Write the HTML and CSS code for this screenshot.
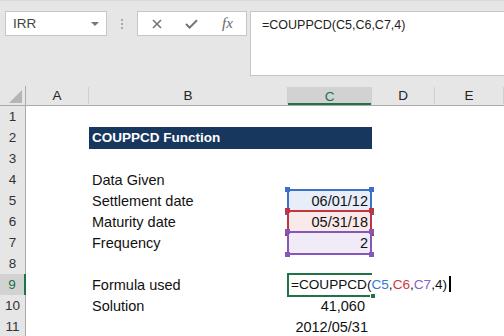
FILE: index.html
```html
<!DOCTYPE html>
<html>
	<head>
		<link rel="stylesheet" href="styles.css">
	</head>
	<body>
		<div class="toolbar">
			<div class="namebox">IRR<span class="caret"></span></div>
			<div class="grip"><i></i><i></i><i></i></div>
			<div class="fxbox">
				<svg width="10" height="10" viewBox="0 0 10 10"><path d="M1 1L9 9M9 1L1 9" stroke="#747474" stroke-width="1.6" fill="none"/></svg>
				<svg width="13" height="10" viewBox="0 0 13 10"><path d="M1 5L4.6 8.6L12 1.2" stroke="#747474" stroke-width="2" fill="none"/></svg>
				<span class="fx">fx</span>
			</div>
			<div class="formula">=COUPPCD(C5,C6,C7,4)</div>
		</div>

		<div class="sheet">
			<div class="hdr">
				<div class="corner"><svg width="13" height="13" viewBox="0 0 13 13"><polygon points="13,0 13,13 0,13" fill="#b5b5b5"/></svg></div>
				<div class="col">A</div>
				<div class="col">B</div>
				<div class="col on">C</div>
				<div class="col">D</div>
				<div class="col">E</div>
			</div>

			<div class="row"><div class="rh">1</div><div></div><div></div><div></div><div></div><div></div></div>
			<div class="row"><div class="rh">2</div><div></div><div class="c title">COUPPCD Function</div><div></div><div></div></div>
			<div class="row"><div class="rh">3</div><div></div><div></div><div></div><div></div><div></div></div>
			<div class="row"><div class="rh">4</div><div></div><div class="c">Data Given</div><div></div><div></div><div></div></div>
			<div class="row">
				<div class="rh">5</div><div></div>
				<div class="c">Settlement date</div>
				<div class="c num ref blue"><span class="h tl"></span><span class="h tr"></span><span class="h bl"></span><span class="h br"></span>06/01/12</div>
				<div></div><div></div>
			</div>
			<div class="row">
				<div class="rh">6</div><div></div>
				<div class="c">Maturity date</div>
				<div class="c num ref red"><span class="h tl"></span><span class="h tr"></span><span class="h bl"></span><span class="h br"></span>05/31/18</div>
				<div></div><div></div>
			</div>
			<div class="row">
				<div class="rh">7</div><div></div>
				<div class="c">Frequency</div>
				<div class="c num ref purple"><span class="h tl"></span><span class="h tr"></span><span class="h bl"></span><span class="h br"></span>2</div>
				<div></div><div></div>
			</div>
			<div class="row"><div class="rh">8</div><div></div><div></div><div></div><div></div><div></div></div>
			<div class="row">
				<div class="rh on">9</div><div></div>
				<div class="c">Formula used</div>
				<div class="c edit">=COUPPCD(<span class="k1">C5</span>,<span class="k2">C6</span>,<span class="k3">C7</span>,4)<span class="cur"></span></div>
				<div></div><div></div>
			</div>
			<div class="row">
				<div class="rh">10</div><div></div>
				<div class="c">Solution</div>
				<div class="c num pad">41,060</div>
				<div></div><div></div>
			</div>
			<div class="row">
				<div class="rh">11</div><div></div><div></div>
				<div class="c num">2012/05/31</div>
				<div></div><div></div>
			</div>
		</div>
	</body>
</html>
```

FILE: styles.css
```css
body {
	margin: 0;
	font-family: "Liberation Sans", Arial, sans-serif;
	background: #e6e6e6;
	overflow: hidden;
}

.toolbar {
	display: flex;
	align-items: flex-start;
	border-top: 1px solid #d9d9d9;
	padding-top: 10px;
	height: 65px;
	margin-bottom: 10px;
}

.namebox {
	margin-left: 5px;
	width: 102px;
	height: 25px;
	box-sizing: border-box;
	border: 1px solid #c6c6c6;
	background: #fff;
	display: flex;
	align-items: center;
	justify-content: space-between;
	padding: 0 7px;
	font-size: 13.5px;
	color: #444;
}

.caret {
	border-left: 4px solid transparent;
	border-right: 4px solid transparent;
	border-top: 4px solid #777;
}

.grip {
	width: 30px;
	height: 25px;
	display: flex;
	flex-direction: column;
	align-items: center;
	justify-content: center;
	gap: 2px;
}

.grip i {
	width: 2px;
	height: 2px;
	background: #a9a9a9;
}

.fxbox {
	width: 110px;
	height: 25px;
	box-sizing: border-box;
	border: 1px solid #c6c6c6;
	background: #fff;
	display: flex;
	align-items: center;
	padding-left: 14px;
	gap: 23px;
}

.fx {
	font-family: "Liberation Serif", serif;
	font-style: italic;
	font-size: 15px;
	color: #666;
	margin-left: 1px;
}

.formula {
	margin-left: 3px;
	flex: 1;
	height: 65px;
	box-sizing: border-box;
	border: 1px solid #c6c6c6;
	border-right: none;
	background: #fff;
	padding: 3px 11px;
	font-size: 12.5px;
	line-height: 20px;
	color: #222;
}

.sheet {
	background: #fff;
	height: 260px;
}

.hdr, .row {
	display: grid;
	grid-template-columns: 26px 63px 199px 84px 63px 1fr;
}

.hdr {
	height: 20px;
	background: #e6e6e6;
	border-bottom: 1px solid #ababab;
	box-sizing: border-box;
}

.corner {
	border-right: 1px solid #ababab;
	display: flex;
	align-items: flex-end;
	justify-content: flex-end;
	padding: 0 3px 2px 0;
}

.col {
	border-right: 1px solid #d0d0d0;
	margin: 1px 0 1px;
	font-size: 13.5px;
	color: #222;
	display: flex;
	align-items: center;
	justify-content: center;
}

.col.on {
	margin: 1px 0 0;
	background: #d2d2d2;
	color: #217346;
	box-shadow: inset 0 -2px #217346;
}

.row {
	height: 21px;
}

.rh {
	background: #e6e6e6;
	border-right: 1px solid #ababab;
	border-bottom: 1px solid #d4d4d4;
	box-sizing: border-box;
	font-size: 13.5px;
	line-height: 21px;
	text-align: center;
	color: #333;
}

.rh.on {
	background: #d2d2d2;
	border-right: 2px solid #217346;
	color: #217346;
}

.c {
	font-size: 14.5px;
	line-height: 22px;
	padding: 0 3px;
	white-space: nowrap;
	color: #111;
}

.title {
	grid-column: span 2;
	background: #17375e;
	color: #fff;
	font-weight: bold;
	font-size: 13.5px;
}

.num {
	text-align: right;
	padding-right: 4px;
}

.num.pad {
	padding-right: 7px;
}

.ref {
	position: relative;
}

.ref::before {
	content: "";
	position: absolute;
	top: -1px;
	left: -1px;
	right: 0;
	bottom: -1px;
	border: 2px solid var(--c);
}

.blue { --c: #3b6fc9; background: #e8eef9; }
.red { --c: #c0343f; background: #f9e9e9; }
.purple { --c: #8458b8; background: #f0ebf6; }

.h {
	position: absolute;
	width: 5px;
	height: 5px;
	background: var(--c);
}

.tl { left: -3px; top: -3px; }
.tr { right: -2px; top: -3px; }
.bl { left: -3px; bottom: -3px; }
.br { right: -2px; bottom: -3px; }

.edit {
	position: relative;
	z-index: 1;
	font-size: 13.6px;
}

.edit::before {
	content: "";
	position: absolute;
	top: -1px;
	left: -1px;
	bottom: -1px;
	width: 83px;
	border: 2px solid #217346;
	border-right: none;
}

.edit::after {
	content: "";
	position: absolute;
	left: 82px;
	bottom: -3px;
	width: 4px;
	height: 4px;
	background: #217346;
	border: 1px solid #fff;
}

.k1 { color: #3a78d8; }
.k2 { color: #d0383f; }
.k3 { color: #8b5fc9; }

.cur {
	display: inline-block;
	width: 2px;
	height: 16px;
	background: #000;
	vertical-align: -3px;
	margin-left: 2px;
}
```
